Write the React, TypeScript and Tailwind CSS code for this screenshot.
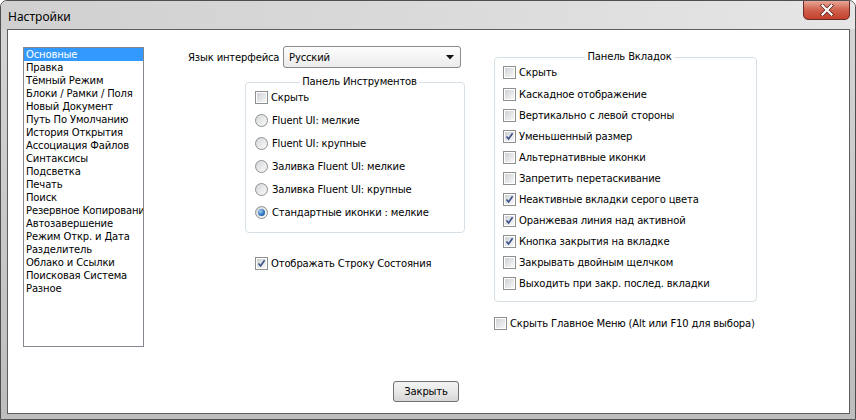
import React from "react";

const sections = [
  "Основные",
  "Правка",
  "Тёмный Режим",
  "Блоки / Рамки / Поля",
  "Новый Документ",
  "Путь По Умолчанию",
  "История Открытия",
  "Ассоциация Файлов",
  "Синтаксисы",
  "Подсветка",
  "Печать",
  "Поиск",
  "Резервное Копирование",
  "Автозавершение",
  "Режим Откр. и Дата",
  "Разделитель",
  "Облако и Ссылки",
  "Поисковая Система",
  "Разное",
];

const toolbarOptions = [
  "Fluent UI: мелкие",
  "Fluent UI: крупные",
  "Заливка Fluent UI: мелкие",
  "Заливка Fluent UI: крупные",
  "Стандартные иконки : мелкие",
];

const tabOptions = [
  { label: "Каскадное отображение", checked: false },
  { label: "Вертикально с левой стороны", checked: false },
  { label: "Уменьшенный размер", checked: true },
  { label: "Альтернативные иконки", checked: false },
  { label: "Запретить перетаскивание", checked: false },
  { label: "Неактивные вкладки серого цвета", checked: true },
  { label: "Оранжевая линия над активной", checked: true },
  { label: "Кнопка закрытия на вкладке", checked: true },
  { label: "Закрывать двойным щелчком", checked: false },
  { label: "Выходить при закр. послед. вкладки", checked: false },
];

function CheckBox({ checked }: { checked?: boolean }) {
  return (
    <span className="w-[13px] h-[13px] border border-[#8e8f8f] bg-white p-px flex shrink-0">
      <span className="flex-1 bg-gradient-to-br from-[#cfd2d6] to-[#f7f7f7] flex items-center justify-center">
        {checked && (
          <svg width="9" height="9" viewBox="0 0 9 9">
            <path d="M1.5 4.5 L3.6 7 L7.6 1.2" fill="none" stroke="#3a4f8a" strokeWidth="1.6" />
          </svg>
        )}
      </span>
    </span>
  );
}

function Radio({ checked }: { checked?: boolean }) {
  return (
    <span className="w-[13px] h-[13px] rounded-full border border-[#8e8f8f] bg-gradient-to-br from-[#d4d6d9] to-[#fbfbfb] flex items-center justify-center shrink-0">
      {checked && (
        <span className="w-[7px] h-[7px] rounded-full bg-[radial-gradient(circle_at_35%_35%,#9fd0f5,#2a6cb8_60%,#1b4d8c)]" />
      )}
    </span>
  );
}

export default function App() {
  return (
    <div
      className="w-[856px] h-[420px] bg-gradient-to-b from-[#d6d6d6] to-[#bdbdbd] border border-[#4f4f4f] rounded-t-[7px] flex flex-col text-[10px] tracking-[-0.15px] text-black overflow-hidden"
      style={{ fontFamily: '"DejaVu Sans", sans-serif' }}
    >
      {/* Title bar */}
      <div className="h-[28px] flex items-start justify-between bg-gradient-to-r from-[#d0d0d0] via-[#dadada] to-[#e6e6e6]">
        <span className="pl-[7px] pt-[7px] text-[12px] tracking-normal" style={{ fontFamily: '"Noto Sans", sans-serif' }}>
          Настройки
        </span>
        <div className="mr-[5px] w-[47px] h-[20px] -mt-px rounded-b-[5px] border border-[#6a2c24] bg-gradient-to-b from-[#e7a597] via-[#d0604c] to-[#c2402d] flex items-center justify-center">
          <svg width="14" height="12" viewBox="0 0 14 12">
            <path d="M2.5 1.5 L11.5 10.5 M11.5 1.5 L2.5 10.5" stroke="#5a1c14" strokeWidth="3.6" strokeLinecap="square" />
            <path d="M2.5 1.5 L11.5 10.5 M11.5 1.5 L2.5 10.5" stroke="#ffffff" strokeWidth="2.2" strokeLinecap="square" />
          </svg>
        </div>
      </div>

      {/* Client area */}
      <div className="ml-[6px] mr-[5px] mb-[5px] flex-1 bg-white border border-[#5e5e5e] flex flex-col">
        <div className="flex items-start">
          {/* Section list */}
          <div className="ml-[15px] mt-[17px] w-[121px] h-[300px] border border-[#828790] overflow-hidden">
            {sections.map((s, i) => (
              <div
                key={s}
                className={`h-[13px] leading-[13px] pl-[2px] whitespace-nowrap ${i === 0 ? "bg-[#3399ff] text-white" : ""}`}
              >
                {s}
              </div>
            ))}
          </div>

          {/* Middle column */}
          <div className="ml-[44px] mt-[16px] w-[277px] flex flex-col">
            <div className="w-[273px] flex items-center justify-between">
              <span className="whitespace-nowrap">Язык интерфейса</span>
              <div className="w-[178px] h-[22px] border border-[#8a8a8a] rounded-[3px] bg-gradient-to-b from-[#fdfdfd] to-[#ebebeb] flex items-center justify-between pl-[5px] pr-[6px]">
                <span>Русский</span>
                <svg width="8" height="5" viewBox="0 0 8 5">
                  <path d="M0 0 H8 L4 4.5 Z" fill="#111" />
                </svg>
              </div>
            </div>

            <fieldset className="ml-[57px] mt-[7px] w-[220px] border border-[#d5dfe5] rounded-[4px] pl-[9px] pb-[8px]">
              <legend className="mx-auto px-[2px] leading-[14px]">Панель Инструментов</legend>
              <div className="h-[16px] flex items-center gap-[3px]">
                <CheckBox />
                <span>Скрыть</span>
              </div>
              <div className="mt-[4px] flex flex-col">
                {toolbarOptions.map((o, i) => (
                  <div key={o} className="h-[23px] flex items-center gap-[4px]">
                    <Radio checked={i === toolbarOptions.length - 1} />
                    <span>{o}</span>
                  </div>
                ))}
              </div>
            </fieldset>

            <div className="ml-[67px] mt-[22px] h-[16px] flex items-center gap-[3px]">
              <CheckBox checked />
              <span>Отображать Строку Состояния</span>
            </div>
          </div>

          {/* Right column */}
          <div className="ml-[29px] mt-[20px] flex flex-col">
            <fieldset className="w-[263px] border border-[#d5dfe5] rounded-[4px] pl-[8px] pb-[7px]">
              <legend className="mx-auto px-[2px] leading-[14px]">Панель Вкладок</legend>
              <div className="h-[16px] flex items-center gap-[3px]">
                <CheckBox />
                <span>Скрыть</span>
              </div>
              <div className="mt-[4px] flex flex-col">
                {tabOptions.map((o) => (
                  <div key={o.label} className="h-[21px] flex items-center gap-[3px]">
                    <CheckBox checked={o.checked} />
                    <span>{o.label}</span>
                  </div>
                ))}
              </div>
            </fieldset>

            <div className="mt-[13px] h-[16px] flex items-center gap-[3px]">
              <CheckBox />
              <span>Скрыть Главное Меню (Alt или F10 для выбора)</span>
            </div>
          </div>
        </div>

        <div className="flex-1" />

        <div className="flex justify-center pr-[5px] pb-[11px]">
          <button className="w-[66px] h-[21px] border border-[#707070] rounded-[3px] bg-gradient-to-b from-[#f4f4f4] via-[#e8e8e8] to-[#d6d6d6]">
            Закрыть
          </button>
        </div>
      </div>
    </div>
  );
}
